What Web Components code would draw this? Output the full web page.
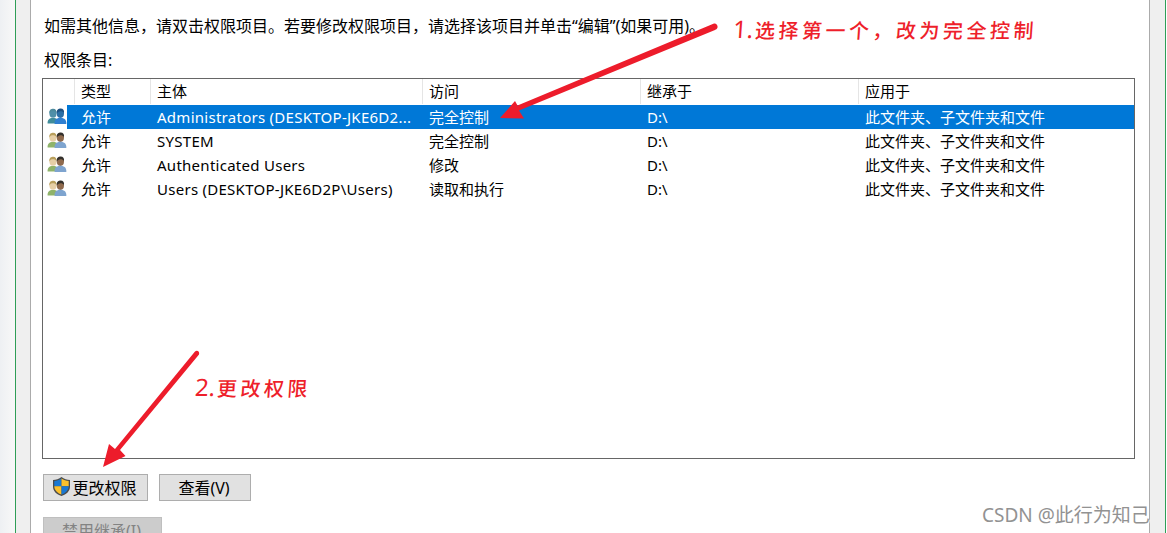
<!DOCTYPE html>
<html lang="zh-CN">
<head>
<meta charset="utf-8">
<title>权限条目</title>
<style>
    html, body { margin: 0; height: 100%; overflow: hidden; background: #fff; }
</style>
</head>
<body>
<perm-page>
    <perm-window>
        <perm-line style="--top:14px">如需其他信息，请双击权限项目。若要修改权限项目，请选择该项目并单击“编辑”(如果可用)。</perm-line>
        <perm-line style="--top:10px">权限条目:</perm-line>
        <perm-list>
            <perm-row type="允许" who="Administrators (DESKTOP-JKE6D2..." access="完全控制" from="D:\" to="此文件夹、子文件夹和文件" selected></perm-row>
            <perm-row type="允许" who="SYSTEM" access="完全控制" from="D:\" to="此文件夹、子文件夹和文件"></perm-row>
            <perm-row type="允许" who="Authenticated Users" access="修改" from="D:\" to="此文件夹、子文件夹和文件"></perm-row>
            <perm-row type="允许" who="Users (DESKTOP-JKE6D2P\Users)" access="读取和执行" from="D:\" to="此文件夹、子文件夹和文件"></perm-row>
        </perm-list>
        <perm-buttons>
            <perm-button shield width="105">更改权限</perm-button>
            <perm-button width="92">查看(V)</perm-button>
        </perm-buttons>
        <perm-buttons style="--top:16px">
            <perm-button disabled width="119">禁用继承(I)</perm-button>
        </perm-buttons>
    </perm-window>
    <red-marks></red-marks>
</perm-page>

<script>
const FONT = `"Noto Sans", "Noto Sans CJK SC", sans-serif`;

class PermPage extends HTMLElement {
    constructor(){
        super();
        this.attachShadow({ mode: 'open' }).innerHTML = `
            <style>
                :host{
                    display: flex;
                    position: relative;
                    width: 1167px;
                    height: 533px;
                    overflow: hidden;
                    font-family: ${FONT};
                    color: #000;
                }
                .desk-left{
                    width: 15px;
                    background: linear-gradient(90deg, #eef0f3, #f8f8f8);
                    border-right: 1px solid #2f9e57;
                }
                .frame{
                    background: #efefef;
                }
                .frame.left{ width: 14px; border-right: 1px solid #ababab; }
                .frame.right{ width: 15px; border-left: 1px solid #ababab; border-right: 1px solid #2f9e57; }
                .desk-right{ flex: 1; background: #fff; }
            </style>
            <div class="desk-left"></div>
            <div class="frame left"></div>
            <slot></slot>
            <div class="frame right"></div>
            <div class="desk-right"></div>
        `;
    }
}

class PermWindow extends HTMLElement {
    constructor(){
        super();
        this.attachShadow({ mode: 'open' }).innerHTML = `
            <style>
                :host{
                    display: block;
                    width: 1118px;
                    background: #fff;
                    padding-left: 11px;
                    box-sizing: border-box;
                }
            </style>
            <slot></slot>
        `;
    }
}

class PermLine extends HTMLElement {
    constructor(){
        super();
        this.attachShadow({ mode: 'open' }).innerHTML = `
            <style>
                :host{
                    display: block;
                    margin-top: var(--top, 0);
                    margin-left: 2px;
                    font-size: 16px;
                    line-height: 24px;
                    white-space: nowrap;
                }
            </style>
            <slot></slot>
        `;
    }
}

// cabecera y filas comparten las mismas columnas
const COLUMNS = "31px 76px 272px 218px 218px 1fr";

class PermList extends HTMLElement {
    constructor(){
        super();
        this.attachShadow({ mode: 'open' }).innerHTML = `
            <style>
                :host{
                    display: block;
                    width: 1091px;
                    height: 379px;
                    margin-top: 6px;
                    border: 1px solid #666;
                    font-size: 15px;
                    overflow: hidden;
                }
                .head{
                    display: grid;
                    grid-template-columns: ${COLUMNS};
                    height: 26px;
                    line-height: 26px;
                }
                .head div{
                    padding-left: 6px;
                    border-left: 1px solid #e5e5e5;
                    margin-bottom: 1px;
                    line-height: 25px;
                }
                .head div:first-child{ border-left: none; }
            </style>
            <div class="head">
                <div></div><div>类型</div><div>主体</div><div>访问</div><div>继承于</div><div>应用于</div>
            </div>
            <slot></slot>
        `;
    }
}

class PermRow extends HTMLElement {
    connectedCallback(){
        const sel = this.hasAttribute("selected");
        const a = (n) => this.getAttribute(n);
        const c = sel
            ? { hairL:"#4d8a9c", skinL:"#4f8fa8", bodyL:"#3f8c9a", hairR:"#1d4f80", skinR:"#2a6ea5", bodyR:"#2f7fd0" }
            : { hairL:"#b89f5c", skinL:"#e6cfa6", bodyL:"#8fb36a", hairR:"#33302c", skinR:"#8f6a4d", bodyR:"#7ea4cf" };
        this.attachShadow({ mode: 'open' }).innerHTML = `
            <style>
                :host{
                    display: grid;
                    grid-template-columns: ${COLUMNS};
                    height: 24px;
                    line-height: 24px;
                    white-space: nowrap;
                }
                .icono{ display: flex; padding: 3px 0 0 4px; width: 24px; background: #fff; }
                .celda{ padding-left: 7px; overflow: hidden; }
                .quien{ letter-spacing: .27px; }
                .sel{ background: #0078d7; color: #fff; }
                .sel.primera{ margin-left: -7px; padding-left: 14px; }
            </style>
            <div class="icono">
                <svg width="20" height="18" viewBox="0 0 20 18">
                    <ellipse cx="6" cy="5.500" rx="3.600" ry="4.200" fill="${c.skinL}"/>
                    <path d="M2.400 5.500C2 1.500 4.500.8 6.200.8 8.600.8 9.800 2.600 9.400 5 8.600 3.400 7 3 5 3.200 3.800 3.400 3 4.200 2.400 5.500z" fill="${c.hairL}"/>
                    <path d="M.6 15.500c-.3-3.600 1.500-5.600 5.400-5.600s5.600 2 5.400 5.600z" fill="${c.bodyL}"/>
                    <ellipse cx="13.400" cy="5.600" rx="3.600" ry="4.300" fill="${c.skinR}"/>
                    <path d="M9.800 5.400C9.400 1.600 11.800.6 13.600.6c2.600 0 3.800 1.900 3.400 4.600-.9-1.600-2.400-2-4.400-1.800-1.200.2-2.200.8-2.800 2z" fill="${c.hairR}"/>
                    <path d="M7.600 16c-.3-4 1.700-6.200 5.800-6.200s6.200 2.200 5.900 6.200z" fill="${c.bodyR}"/>
                </svg>
            </div>
            <div class="celda primera ${sel ? "sel" : ""}">${a("type")}</div>
            <div class="celda quien ${sel ? "sel" : ""}">${a("who")}</div>
            <div class="celda ${sel ? "sel" : ""}">${a("access")}</div>
            <div class="celda ${sel ? "sel" : ""}">${a("from")}</div>
            <div class="celda ${sel ? "sel" : ""}">${a("to")}</div>
        `;
    }
}

class PermButtons extends HTMLElement {
    constructor(){
        super();
        this.attachShadow({ mode: 'open' }).innerHTML = `
            <style>
                :host{
                    display: flex;
                    gap: 11px;
                    margin-top: var(--top, 15px);
                    margin-left: 1px;
                }
            </style>
            <slot></slot>
        `;
    }
}

class PermButton extends HTMLElement {
    connectedCallback(){
        const shield = this.hasAttribute("shield");
        const off = this.hasAttribute("disabled");
        this.attachShadow({ mode: 'open' }).innerHTML = `
            <style>
                :host{
                    display: flex;
                    align-items: center;
                    justify-content: center;
                    box-sizing: border-box;
                    width: ${this.getAttribute("width")}px;
                    height: 27px;
                    padding: 0 2px 2px 0;
                    background: ${off ? "#cccccc" : "#e1e1e1"};
                    border: 1px solid ${off ? "#bfbfbf" : "#adadad"};
                    color: ${off ? "#838383" : "#000"};
                    font-size: 16px;
                    white-space: nowrap;
                }
                svg{ margin-right: 1px; flex: none; }
            </style>
            ${shield ? `
            <svg width="19" height="21" viewBox="0 0 19 21">
                <path d="M9.500 1C7 3 4 3.800 1 4v6.500C1 15 4.500 18.500 9.500 20c5-1.500 8.500-5 8.500-9.500V4c-3-.2-6-1-8.500-3z" fill="#4c4c4c"/>
                <path d="M9.500 2.400C7.300 4 4.800 4.800 2.300 5v5.200h7.200z" fill="#1a78d2"/>
                <path d="M9.500 2.400c2.200 1.600 4.700 2.400 7.200 2.600v5.200H9.500z" fill="#fbc02d"/>
                <path d="M2.300 10.200c0 3.700 3 6.800 7.200 8.300v-8.300z" fill="#fbc02d"/>
                <path d="M16.700 10.200c0 3.700-3 6.800-7.200 8.300v-8.300z" fill="#1a78d2"/>
            </svg>` : ""}
            <slot></slot>
        `;
    }
}

// anotaciones en rojo encima de la captura
class RedMarks extends HTMLElement {
    constructor(){
        super();
        this.attachShadow({ mode: 'open' }).innerHTML = `
            <style>
                :host{
                    position: absolute;
                    inset: 0;
                    pointer-events: none;
                }
                svg{ position: absolute; left: 0; top: 0; }
                .nota{
                    position: absolute;
                    color: #ee1f2b;
                    font-size: 20px;
                    font-weight: 500;
                    line-height: 26px;
                    white-space: nowrap;
                    letter-spacing: 3.500px;
                    transform: skewX(-4deg);
                }
                .num{ font-size: 24px; font-weight: 400; letter-spacing: 0; margin-right: 2px; font-family: "Noto Sans", sans-serif; }
                .uno{ left: 733px; top: 16px; }
                .dos{ left: 195px; top: 374px; letter-spacing: 3.500px; }
                .marca{
                    position: absolute;
                    left: 982px;
                    top: 503px;
                    font-size: 19px;
                    line-height: 24px;
                    color: #929292;
                    white-space: nowrap;
                    text-shadow: 1px 1px 0 rgba(255,255,255,.7);
                }
            </style>
            <svg width="1167" height="533" viewBox="0 0 1167 533">
                <path d="M714 23.500C716 23 718 25 717.500 27.500 717 29 716 29.500 715 30L519 110.500 524 118.500 500 118 515 101 517.500 105.500z" fill="#ed1c2b"/>
                <path d="M195 351.500C197 349.500 200 351.500 199 354.500L120 450 125.500 456 103 467 109 444 115 449z" fill="#ed1c2b"/>
            </svg>
            <div class="nota uno"><span class="num">1.</span>选择第一个，改为完全控制</div>
            <div class="nota dos"><span class="num">2.</span>更改权限</div>
            <div class="marca">CSDN @此行为知己</div>
        `;
    }
}

customElements.define("perm-page", PermPage);
customElements.define("perm-window", PermWindow);
customElements.define("perm-line", PermLine);
customElements.define("perm-list", PermList);
customElements.define("perm-row", PermRow);
customElements.define("perm-buttons", PermButtons);
customElements.define("perm-button", PermButton);
customElements.define("red-marks", RedMarks);
</script>
</body>
</html>
